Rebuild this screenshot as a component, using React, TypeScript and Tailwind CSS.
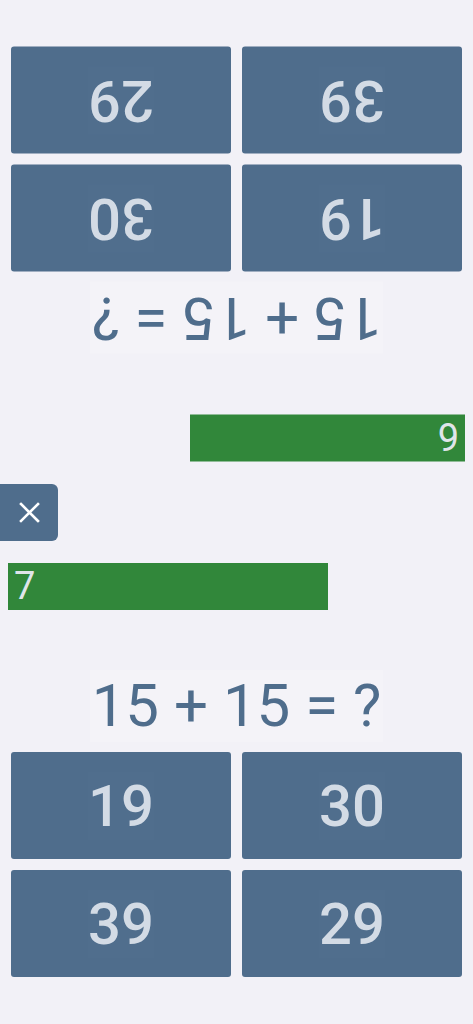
import type { CSSProperties } from 'react';

type Player = {
  score: number;
  barWidth: number;
  options: number[];
};

const question = '15 + 15 = ?';

const players: Player[] = [
  { score: 9, barWidth: 275, options: [19, 30, 39, 29] },
  { score: 7, barWidth: 320, options: [19, 30, 39, 29] },
];

const font: CSSProperties = { fontFamily: 'Roboto, "Noto Sans", sans-serif' };

// label is turned back upright on the flipped side
const ScoreBar = ({ score, width, flipLabel }: { score: number; width: number; flipLabel?: boolean }) => (
  <div className="ml-2 flex h-[47px] items-center bg-[#31873a] px-[6px]" style={{ width }}>
    <span className={`text-[38px] leading-none text-[#dfe5ea] ${flipLabel ? 'rotate-180' : ''}`}>{score}</span>
  </div>
);

const PlayerPanel = ({ player, flipped }: { player: Player; flipped?: boolean }) => (
  <div className={`flex flex-1 flex-col pt-[22px] pb-[47px] ${flipped ? 'rotate-180' : ''}`}>
    <ScoreBar score={player.score} width={player.barWidth} flipLabel={flipped} />

    <div className="flex-1" />

    {/* current question */}
    <div className="mb-[10px] flex justify-center">
      <span className="bg-[#f4f3f8] px-[2px] text-[60px] leading-[72px] text-[#4f6d8c]">{question}</span>
    </div>

    {/* answer buttons */}
    <div className="mx-[11px] grid grid-cols-2 gap-[11px]">
      {player.options.map((n, i) => (
        <button
          key={i}
          className="flex h-[107px] items-center justify-center rounded-[3px] bg-[#4f6d8c] text-[58px] font-medium text-[#d3dbe5]"
        >
          <span className="bg-[#506e8d] leading-[68px]">{n}</span>
        </button>
      ))}
    </div>
  </div>
);

export default function App() {
  return (
    <div className="flex h-[1024px] flex-col overflow-hidden bg-[#f2f1f7]" style={font}>
      <PlayerPanel player={players[0]} flipped />

      <div className="flex h-[57px] items-center">
        <button className="flex h-[57px] w-[58px] items-center justify-center rounded-r-[6px] bg-[#4f6d8c]">
          <svg width="21" height="21" viewBox="0 0 21 21" fill="none" stroke="white" strokeWidth="2.6" strokeLinecap="square">
            <path d="M2 2 L19 19 M19 2 L2 19" />
          </svg>
        </button>
      </div>

      <PlayerPanel player={players[1]} />
    </div>
  );
}
